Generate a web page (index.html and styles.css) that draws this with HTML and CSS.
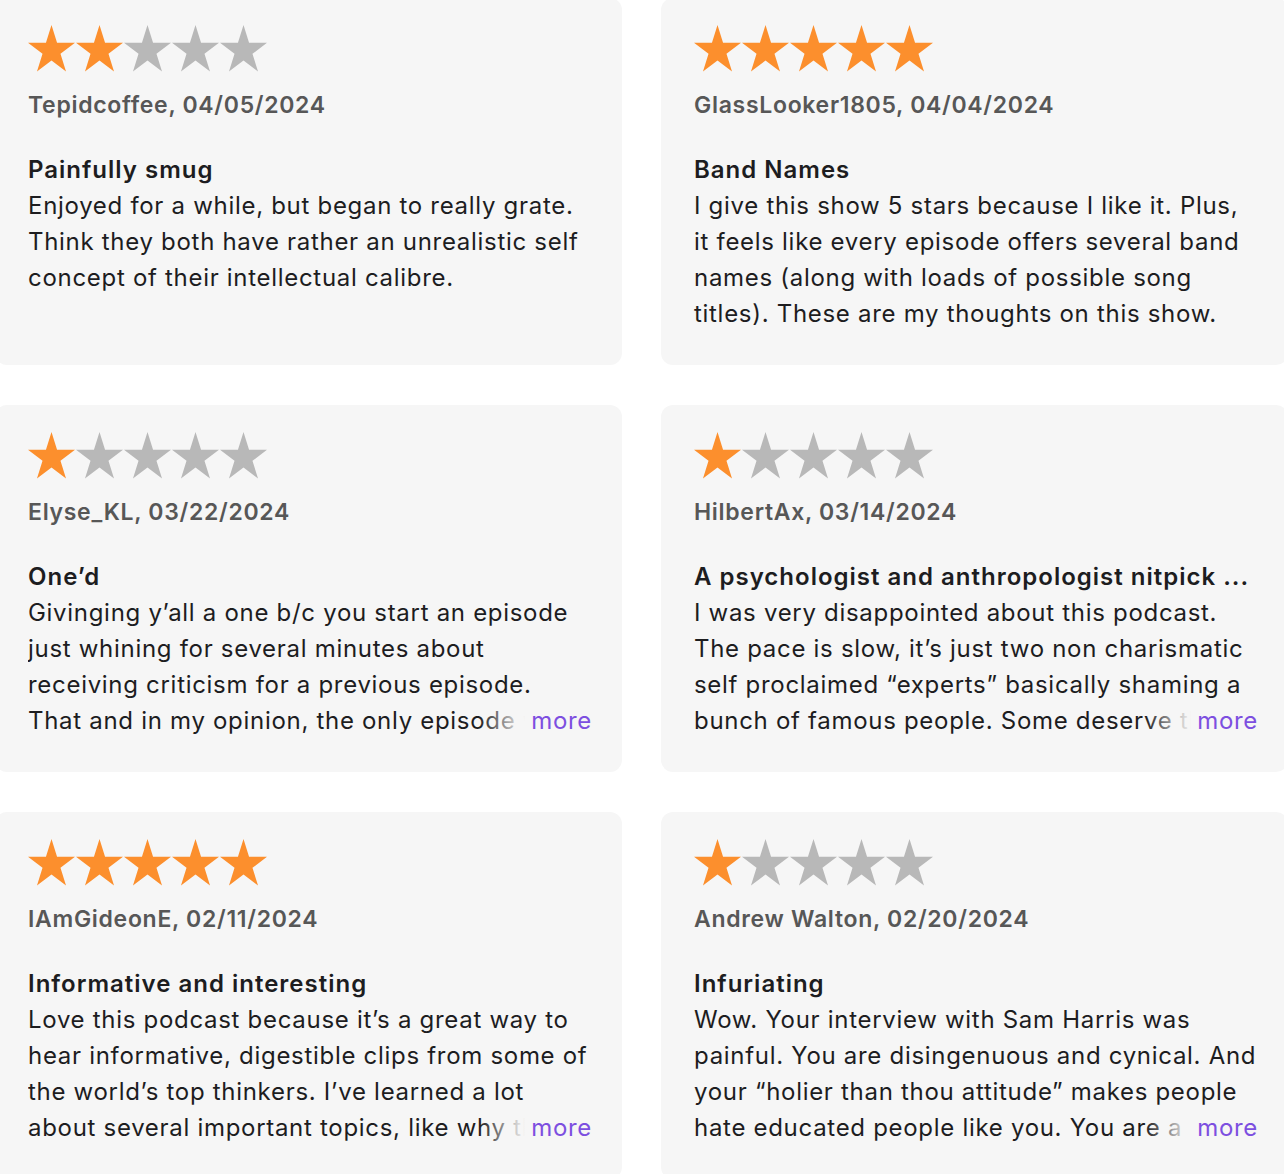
FILE: index.html
```html
<!DOCTYPE html>
<html lang="en">
<head>
<meta charset="utf-8">
<title>Ratings &amp; Reviews</title>
<link rel="stylesheet" href="styles.css">
</head>
<body>
<svg class="defs" width="0" height="0" aria-hidden="true">
  <symbol id="star" viewBox="0 0 47 47">
    <polygon points="23.5,0 29.05,17.8 47,17.8 32.48,28.8 38.02,46.6 23.5,35.6 8.98,46.6 14.52,28.8 0,17.8 17.95,17.8"/>
  </symbol>
</svg>
<main class="grid">
  <article class="card">
    <div class="stars">
      <svg class="star on"><use href="#star"/></svg><svg class="star on"><use href="#star"/></svg><svg class="star"><use href="#star"/></svg><svg class="star"><use href="#star"/></svg><svg class="star"><use href="#star"/></svg>
    </div>
    <div class="meta">Tepidcoffee, 04/05/2024</div>
    <h3 class="title">Painfully smug</h3>
    <p class="body">Enjoyed for a while, but began to really grate. Think they both have rather an unrealistic self concept of their intellectual calibre.</p>
  </article>

  <article class="card">
    <div class="stars">
      <svg class="star on"><use href="#star"/></svg><svg class="star on"><use href="#star"/></svg><svg class="star on"><use href="#star"/></svg><svg class="star on"><use href="#star"/></svg><svg class="star on"><use href="#star"/></svg>
    </div>
    <div class="meta">GlassLooker1805, 04/04/2024</div>
    <h3 class="title">Band Names</h3>
    <p class="body">I give this show 5 stars because I like it. Plus, it feels like every episode offers several band names (along with loads of possible song titles). These are my thoughts on this show.</p>
  </article>

  <article class="card">
    <div class="stars">
      <svg class="star on"><use href="#star"/></svg><svg class="star"><use href="#star"/></svg><svg class="star"><use href="#star"/></svg><svg class="star"><use href="#star"/></svg><svg class="star"><use href="#star"/></svg>
    </div>
    <div class="meta">Elyse_KL, 03/22/2024</div>
    <h3 class="title">One’d</h3>
    <div class="clamp">
      <p class="body">Givinging y’all a one b/c you start an episode just whining for several minutes about receiving criticism for a previous episode. That and in my opinion, the only episode worth listening to in months was the one about language.</p>
      <span class="more">more</span>
    </div>
  </article>

  <article class="card">
    <div class="stars">
      <svg class="star on"><use href="#star"/></svg><svg class="star"><use href="#star"/></svg><svg class="star"><use href="#star"/></svg><svg class="star"><use href="#star"/></svg><svg class="star"><use href="#star"/></svg>
    </div>
    <div class="meta">HilbertAx, 03/14/2024</div>
    <h3 class="title">A psychologist and anthropologist nitpick ...</h3>
    <div class="clamp">
      <p class="body">I was very disappointed about this podcast. The pace is slow, it’s just two non charismatic self proclaimed “experts” basically shaming a bunch of famous people. Some deserve the criticism, but most of the time it feels petty.</p>
      <span class="more">more</span>
    </div>
  </article>

  <article class="card">
    <div class="stars">
      <svg class="star on"><use href="#star"/></svg><svg class="star on"><use href="#star"/></svg><svg class="star on"><use href="#star"/></svg><svg class="star on"><use href="#star"/></svg><svg class="star on"><use href="#star"/></svg>
    </div>
    <div class="meta">IAmGideonE, 02/11/2024</div>
    <h3 class="title">Informative and interesting</h3>
    <div class="clamp">
      <p class="body">Love this podcast because it’s a great way to hear informative, digestible clips from some of the world’s top thinkers. I’ve learned a lot about several important topics, like why the world works the way it does.</p>
      <span class="more">more</span>
    </div>
  </article>

  <article class="card">
    <div class="stars">
      <svg class="star on"><use href="#star"/></svg><svg class="star"><use href="#star"/></svg><svg class="star"><use href="#star"/></svg><svg class="star"><use href="#star"/></svg><svg class="star"><use href="#star"/></svg>
    </div>
    <div class="meta">Andrew Walton, 02/20/2024</div>
    <h3 class="title">Infuriating</h3>
    <div class="clamp">
      <p class="body">Wow. Your interview with Sam Harris was painful. You are disingenuous and cynical. And your “holier than thou attitude” makes people hate educated people like you. You are a big part of the problem.</p>
      <span class="more">more</span>
    </div>
  </article>
</main>
</body>
</html>
```

FILE: styles.css
```css
html, body {
  margin: 0;
  padding: 0;
  background: #ffffff;
}

body {
  font-family: Inter, "Noto Sans", "Liberation Sans", sans-serif;
  color: #1d1d1f;
  overflow: hidden;
}

.defs {
  position: absolute;
  width: 0;
  height: 0;
}

.grid {
  display: grid;
  grid-template-columns: 627px 627px;
  column-gap: 39px;
  row-gap: 40px;
  margin: -2px 0 0 -5px;
}

.card {
  box-sizing: border-box;
  height: 367px;
  padding: 26.7px 30px 0 33px;
  background: #f6f6f6;
  border-radius: 12px;
  overflow: hidden;
}

.stars {
  display: flex;
  gap: 1px;
  height: 47px;
}

.star {
  width: 47px;
  height: 47px;
  fill: #b8b8b8;
}

.star.on {
  fill: #fc8f2d;
}

.meta {
  margin-top: 19px;
  font-size: 23px;
  line-height: 28px;
  font-weight: 600;
  letter-spacing: 0.7px;
  color: #575757;
}

.title {
  margin: 33.6px 0 0 0;
  font-size: 24px;
  line-height: 36px;
  font-weight: 600;
  letter-spacing: 1px;
  color: #1d1d1f;
  white-space: nowrap;
  overflow: hidden;
}

.body {
  margin: 0;
  font-size: 24px;
  line-height: 36px;
  font-weight: 400;
  letter-spacing: 0.7px;
  color: #1d1d1f;
}

.clamp {
  position: relative;
  max-height: 144px;
  overflow: hidden;
}

.more {
  position: absolute;
  right: 0;
  bottom: 0;
  padding-left: 52px;
  font-size: 24px;
  line-height: 36px;
  letter-spacing: 0.7px;
  color: #7d4fe0;
  background: linear-gradient(to right, rgba(246, 246, 246, 0) 0, #f6f6f6 46px);
}
```
